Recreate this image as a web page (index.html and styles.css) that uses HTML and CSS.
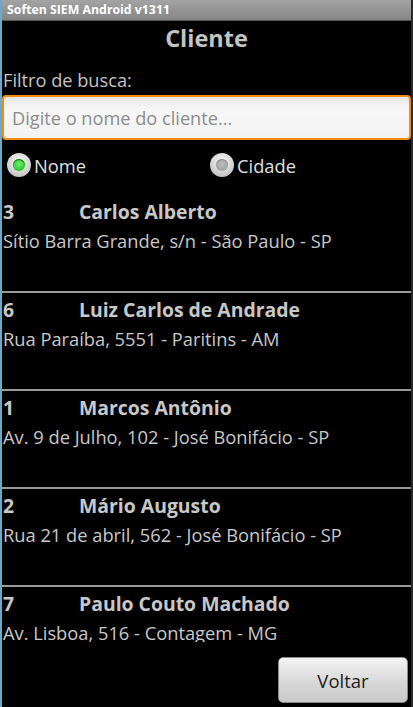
FILE: index.html
```html
<!DOCTYPE html>
<html lang="pt-BR">
  <head>
    <meta charset="UTF-8" />
    <meta name="viewport" content="width=device-width, initial-scale=1.0" />
    <title>Soften SIEM Android v1311</title>
    <link rel="stylesheet" href="styles.css">
  </head>
  <body>
    <div class="screen">
      <div class="titleBar">Soften SIEM Android v1311</div>
      <h1 class="pageTitle">Cliente</h1>
      <label class="filterLabel" for="busca">Filtro de busca:</label>
      <input class="searchBox" id="busca" type="text" placeholder="Digite o nome do cliente..." />
      <div class="radioRow">
        <label class="radioOption">
          <span class="radioDot checked"></span>Nome
        </label>
        <label class="radioOption">
          <span class="radioDot"></span>Cidade
        </label>
      </div>
      <div class="clientList">
        <div class="clientItem">
          <div class="clientHead"><span class="clientCode">3</span>Carlos Alberto</div>
          <div class="clientAddr">Sítio Barra Grande, s/n - São Paulo - SP</div>
        </div>
        <div class="clientItem">
          <div class="clientHead"><span class="clientCode">6</span>Luiz Carlos de Andrade</div>
          <div class="clientAddr">Rua Paraíba, 5551 - Paritins - AM</div>
        </div>
        <div class="clientItem">
          <div class="clientHead"><span class="clientCode">1</span>Marcos Antônio</div>
          <div class="clientAddr">Av. 9 de Julho, 102 - José Bonifácio - SP</div>
        </div>
        <div class="clientItem">
          <div class="clientHead"><span class="clientCode">2</span>Mário Augusto</div>
          <div class="clientAddr">Rua 21 de abril, 562 - José Bonifácio - SP</div>
        </div>
        <div class="clientItem">
          <div class="clientHead"><span class="clientCode">7</span>Paulo Couto Machado</div>
          <div class="clientAddr">Av. Lisboa, 516 - Contagem - MG</div>
        </div>
      </div>
      <div class="footer">
        <button class="backBtn">Voltar</button>
      </div>
    </div>
  </body>
</html>
```

FILE: styles.css
```css
body {
  margin: 0;
  background-color: #000;
  font-family: "Open Sans", "DejaVu Sans", sans-serif;
}

.screen {
  display: flex;
  flex-direction: column;
  height: 707px;
  border-left: 2px solid #6fa8c4;
  border-right: 2px solid #2a2a2a;
  box-sizing: border-box;
  overflow: hidden;
}

.titleBar {
  height: 20px;
  line-height: 20px;
  margin: 0 -2px;
  padding-left: 7px;
  background: linear-gradient(#a3a3a3, #858585);
  border-bottom: 1px solid #555;
  color: #fff;
  font-weight: bold;
  font-size: 12.3px;
}

.pageTitle {
  margin: 0;
  height: 34px;
  line-height: 34px;
  text-align: center;
  color: #c4c4c4;
  font-size: 23.5px;
  font-weight: bold;
}

.filterLabel {
  display: block;
  margin-top: 13px;
  padding-left: 1px;
  color: #c4c4c4;
  font-size: 18.2px;
  line-height: 24px;
}

.searchBox {
  margin: 3px 0 0 0;
  height: 45px;
  box-sizing: border-box;
  border: 2px solid #f28a14;
  border-radius: 4px;
  background: linear-gradient(#e6e6e6, #f7f7f7 30%, #f2f2f2);
  padding: 0 8px;
  font-family: "Open Sans", "DejaVu Sans", sans-serif;
  font-size: 18.2px;
  color: #333;
  outline: none;
}

.searchBox::placeholder {
  color: #8c8c8c;
}

.radioRow {
  display: flex;
  height: 50px;
  align-items: center;
  padding-left: 5px;
}

.radioOption {
  display: flex;
  align-items: center;
  width: 204px;
  color: #e0e0e0;
  font-size: 18.3px;
}

.radioOption + .radioOption {
  margin-left: 2px;
}

.radioDot {
  width: 24px;
  height: 24px;
  border-radius: 50%;
  box-sizing: border-box;
  background: radial-gradient(circle at 50% 35%, #fafafa, #c9c9c9 70%, #a8a8a8);
  display: flex;
  align-items: center;
  justify-content: center;
  margin-right: 3px;
}

.radioDot::after {
  content: "";
  width: 12px;
  height: 12px;
  border-radius: 50%;
  background: radial-gradient(circle at 50% 40%, #bdbdbd, #9a9a9a);
  box-shadow: inset 0 1px 1px #888;
}

.radioDot.checked::after {
  background: radial-gradient(circle at 50% 40%, #6cf06c, #13b813);
  box-shadow: inset 0 1px 1px #0a7a0a;
}

.clientList {
  flex: 1;
  overflow: hidden;
  margin-top: 5px;
}

.clientItem {
  height: 96px;
  border-bottom: 2px solid #9a9a9a;
  padding-left: 1px;
  color: #c8c8c8;
}

.clientHead {
  padding-top: 2px;
  font-size: 19.4px;
  font-weight: bold;
  line-height: 29px;
}

.clientCode {
  display: inline-block;
  width: 76px;
}

.clientAddr {
  font-size: 18.3px;
  line-height: 29px;
}

.footer {
  display: flex;
  justify-content: flex-end;
  padding: 15px 3px 4px 0;
}

.backBtn {
  width: 130px;
  height: 46px;
  border: 1px solid #8a8a8a;
  border-radius: 5px;
  background: linear-gradient(#f4f4f4, #d8d8d8 55%, #c9c9c9);
  font-family: "Open Sans", "DejaVu Sans", sans-serif;
  font-size: 18.5px;
  color: #222;
}
```
